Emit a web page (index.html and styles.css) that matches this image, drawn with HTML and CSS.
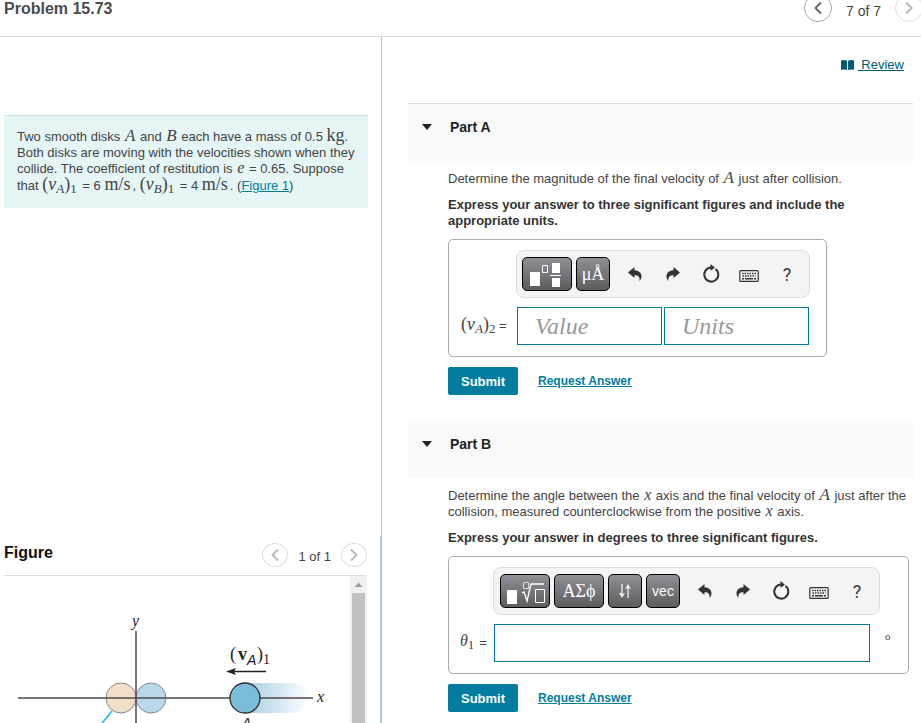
FILE: index.html
```html
<!DOCTYPE html>
<html lang="en">
<head>
    <meta charset="UTF-8" />
    <meta name="viewport" content="width=device-width, initial-scale=1.0" />
    <title>Problem 15.73</title>
    <link rel="stylesheet" href="styles.css">
</head>
<body>
    <!-- shared icons -->
    <svg class="sprite" aria-hidden="true">
        <symbol id="chevron-left" viewBox="0 0 10 14"><path d="M8 1.500 2.500 7 8 12.500" fill="none" stroke="currentColor" stroke-width="2" /></symbol>
        <symbol id="chevron-right" viewBox="0 0 10 14"><path d="M2 1.500 7.500 7 2 12.500" fill="none" stroke="currentColor" stroke-width="2" /></symbol>
        <symbol id="undo" viewBox="0 0 20 20"><path d="M3 8.500 9.500 3v3.300c4.500.2 7 2.700 7 6.200 0 1.800-.8 3.200-2 4.500.6-3.800-1-5.800-5-5.800V14z" fill="currentColor" /></symbol>
        <symbol id="redo" viewBox="0 0 20 20"><path d="M17 8.500 10.500 3v3.300c-4.500.2-7 2.700-7 6.200 0 1.800.8 3.200 2 4.500-.6-3.800 1-5.800 5-5.800V14z" fill="currentColor" /></symbol>
        <symbol id="reset" viewBox="0 0 20 20"><path d="M14.500 5A7 7 0 1 1 10 3.600" fill="none" stroke="currentColor" stroke-width="2" /><path d="m9.500 0 4.500 3.800-4.500 3z" fill="currentColor" /></symbol>
        <symbol id="keyboard" viewBox="0 0 20 12"><rect x=".8" y=".6" width="18.400" height="10.800" rx="1" fill="none" stroke="currentColor" stroke-width="1.200" /><path d="M3 3.500h14M3.500 6h13" stroke="currentColor" stroke-width="1.400" stroke-dasharray="1.500 1" /><path d="M3 8.700h2m1 0h8m1 0h2" stroke="currentColor" stroke-width="1.400" /></symbol>
    </svg>

    <header class="top-bar">
        <h1>Problem 15.73</h1>
        <nav class="pager">
            <button class="round" aria-label="Previous item"><svg width="10" height="14"><use href="#chevron-left" /></svg></button>
            <span>7 of 7</span>
            <button class="round faded" aria-label="Next item" disabled><svg width="10" height="14"><use href="#chevron-right" /></svg></button>
        </nav>
    </header>

    <main>
        <section class="left">
            <div class="problem">
                Two smooth disks <i class="math">A</i> and <i class="math">B</i> each have a mass of 0.5 <span class="math">kg</span>.<br>
                Both disks are moving with the velocities shown when they<br>
                collide. The coefficient of restitution is <i class="math small">e</i> = 0.65. Suppose<br>
                <span class="tall">that <span class="math">(<i>v</i><sub><i>A</i></sub>)<sub>1</sub></span> = 6 <span class="math">m/s</span>, <span class="math">(<i>v</i><sub><i>B</i></sub>)<sub>1</sub></span> = 4 <span class="math">m/s</span>. (<a href="#figure">Figure 1</a>)</span>
            </div>

            <div class="figure-panel" id="figure">
                <div class="figure-head">
                    <h2>Figure</h2>
                    <nav class="pager">
                        <button class="round faded" aria-label="Previous figure" disabled><svg width="10" height="14"><use href="#chevron-left" /></svg></button>
                        <span>1 of 1</span>
                        <button class="round faded" aria-label="Next figure" disabled><svg width="10" height="14"><use href="#chevron-right" /></svg></button>
                    </nav>
                </div>
                <div class="figure-view">
                    <svg class="diagram" width="346" height="160" viewBox="0 0 346 160">
                        <defs>
                            <linearGradient id="trail">
                                <stop offset="0" stop-color="#a9cfe4" />
                                <stop offset=".3" stop-color="#c0dcec" />
                                <stop offset="1" stop-color="#fff" />
                            </linearGradient>
                        </defs>
                        <path d="M108 135 94 152" stroke="#1fb4ea" stroke-width="1.500" />
                        <circle cx="117" cy="122" r="15" fill="#f1dfca" stroke="#8b8583" />
                        <circle cx="147" cy="122" r="15" fill="#b9d9ea" stroke="#7f8d95" />
                        <path d="M241 107h48q16 4 16 15t-16 15h-48z" fill="url(#trail)" />
                        <path d="M14 122h295M132 55v105" stroke="#4f4a4c" stroke-width="1.500" />
                        <circle cx="241" cy="122" r="15" fill="#7bbdd8" stroke="#2b2b2b" stroke-width="1.300" />
                        <path d="M230 95.500h32" stroke="#222" stroke-width="1.500" />
                        <path d="m222 95.500 10-3.500-2 3.500 2 3.500z" fill="#222" />
                        <text x="128" y="50" class="axis">y</text>
                        <text x="313" y="126" class="axis">x</text>
                        <text x="226" y="84" class="label">(</text>
                        <text x="234" y="84" class="label bold">v</text>
                        <text x="243" y="89" class="label index">A</text>
                        <text x="253" y="84" class="label">)</text>
                        <text x="259" y="88" class="label digit">1</text>
                        <text x="238" y="152" class="label index">A</text>
                    </svg>
                    <div class="scrollbar"><span class="scroll-up"></span><span class="thumb"></span></div>
                </div>
            </div>
        </section>

        <section class="right">
            <a class="review" href="#review"><svg width="13" height="10" viewBox="0 0 13 10"><path d="M0 .500q3.500-1 6 .4V10Q3.500 9 0 9.700zM13 .500q-3.500-1-6 .4V10q2.500-1 6-.3z" fill="currentColor" /></svg><span>&nbsp;Review</span></a>

            <article class="part">
                <h3 class="part-head ruled">Part A</h3>
                <div class="part-body">
                    <p>Determine the magnitude of the final velocity of <i class="math">A</i> just after collision.</p>
                    <p class="hint">Express your answer to three significant figures and include the<br>appropriate units.</p>
                    <form class="answer answer-a">
                        <div class="toolbar">
                            <button type="button" class="tool wide" aria-label="Templates">
                                <svg width="36" height="26" viewBox="0 0 36 26"><path d="M1 11h10v14H1z" fill="#fff" /><path d="M13.500 4.500h5v7h-5z" fill="none" stroke="#fff" /><path d="M23 2h8v10h-8zM23 17h8v10h-8zM21 14h11v1H21z" fill="#fff" /></svg>
                            </button>
                            <button type="button" class="tool serif">μÅ</button>
                            <div class="actions">
                                <button type="button" aria-label="Undo"><svg width="20" height="20"><use href="#undo" /></svg></button>
                                <button type="button" aria-label="Redo"><svg width="20" height="20"><use href="#redo" /></svg></button>
                                <button type="button" aria-label="Reset"><svg width="20" height="20"><use href="#reset" /></svg></button>
                                <button type="button" aria-label="Keyboard"><svg class="keys" width="20" height="12"><use href="#keyboard" /></svg></button>
                                <button type="button">?</button>
                            </div>
                        </div>
                        <label for="value"><span class="math">(<i>v</i><sub><i>A</i></sub>)<sub>2</sub></span> =</label>
                        <div class="fields">
                            <input type="text" id="value" placeholder="Value" />
                            <input type="text" id="units" placeholder="Units" aria-label="Units" />
                        </div>
                    </form>
                    <div class="submit-row">
                        <button class="submit">Submit</button>
                        <a href="#answer-a">Request Answer</a>
                    </div>
                </div>
            </article>

            <article class="part">
                <h3 class="part-head">Part B</h3>
                <div class="part-body">
                    <p>Determine the angle between the <i class="math small">x</i> axis and the final velocity of <i class="math">A</i> just after the<br>collision, measured counterclockwise from the positive <i class="math small">x</i> axis.</p>
                    <p class="hint">Express your answer in degrees to three significant figures.</p>
                    <form class="answer answer-b">
                        <div class="toolbar">
                            <button type="button" class="tool wide" aria-label="Templates">
                                <svg width="40" height="26" viewBox="0 0 40 26"><path d="M2 12h10v14H2z" fill="#fff" /><path d="M18.500 4.500h5v6h-5z" fill="none" stroke="#ddd" /><path d="m17 15 2-1 3 9 4-17h13" fill="none" stroke="#fff" stroke-width="1.300" /><path d="M30.500 11.500h9v13h-9z" fill="none" stroke="#fff" /></svg>
                            </button>
                            <button type="button" class="tool wide serif">ΑΣϕ</button>
                            <button type="button" class="tool" aria-label="Arrows">
                                <svg width="14" height="16" viewBox="0 0 14 16"><path d="M4 1v12M10 15V3" stroke="#eee" stroke-width="1.300" /><path d="m1 10 3 5V10zm3 0v5l3-5-3 1zM7 6l3-5 3 5-3-1z" fill="#eee" /></svg>
                            </button>
                            <button type="button" class="tool">vec</button>
                            <div class="actions">
                                <button type="button" aria-label="Undo"><svg width="20" height="20"><use href="#undo" /></svg></button>
                                <button type="button" aria-label="Redo"><svg width="20" height="20"><use href="#redo" /></svg></button>
                                <button type="button" aria-label="Reset"><svg width="20" height="20"><use href="#reset" /></svg></button>
                                <button type="button" aria-label="Keyboard"><svg class="keys" width="20" height="12"><use href="#keyboard" /></svg></button>
                                <button type="button">?</button>
                            </div>
                        </div>
                        <label for="theta"><span class="math small"><i>θ</i><sub>1</sub></span> =</label>
                        <div class="fields">
                            <input type="text" id="theta" />
                            <span class="degree">o</span>
                        </div>
                    </form>
                    <div class="submit-row">
                        <button class="submit">Submit</button>
                        <a href="#answer-b">Request Answer</a>
                    </div>
                </div>
            </article>
        </section>
    </main>
</body>
</html>
```
FILE: styles.css
```css
* {
    box-sizing: border-box;
}
body {
    margin: 0;
    height: 100vh;
    display: flex;
    flex-direction: column;
    overflow: hidden;
    background: #fff;
    color: #444;
    font-family: "Liberation Sans", Arial, sans-serif;
    font-size: 13px;
    line-height: 16px;
}
button,
input {
    font-family: inherit;
    margin: 0;
    padding: 0;
}
button {
    cursor: pointer;
}
h1,
h2,
h3,
p {
    margin: 0;
}
a {
    color: #047c9f;
}
.sprite {
    position: absolute;
    width: 0;
    height: 0;
}
.math {
    font-family: "Liberation Serif", "Times New Roman", serif;
    font-size: 18px;
    line-height: 0;
}
i.math {
    margin: 0 1px;
    font-size: 17px;
}
.math.small {
    font-size: 16px;
}
.math sub {
    font-size: 13px;
    line-height: 0;
    vertical-align: -3px;
}

/* top bar */
.top-bar {
    flex: none;
    display: flex;
    justify-content: space-between;
    height: 37px;
    padding-left: 4px;
    border-bottom: 1px solid #ddd;
}
h1 {
    font-size: 16px;
    line-height: 18px;
    color: #4c4c4c;
}
.pager {
    display: flex;
    align-items: center;
    gap: 14px;
    font-size: 14px;
}
.top-bar .pager {
    height: 28px;
    margin: -6px -2px 0 0;
}
.pager span {
    padding-top: 5px;
}
.round {
    display: flex;
    align-items: center;
    justify-content: center;
    width: 28px;
    height: 28px;
    border: 1px solid #aaa;
    border-radius: 50%;
    background: #fff;
    color: #666;
}
.round.faded {
    border-color: #ddd;
    color: #bbb;
}

main {
    flex: 1;
    min-height: 0;
    display: grid;
    grid-template-columns: 382px 1fr;
    grid-template-rows: minmax(0, 1fr);
}

/* problem and figure */
.left {
    display: flex;
    flex-direction: column;
    justify-content: space-between;
    padding-top: 78px;
    border-right: 1px solid #b9c4cc;
}
.problem {
    margin: 0 13px 0 4px;
    padding: 13px 0 13px 13px;
    border-top: 1px solid #d4dfdf;
    background: #e6f5f6;
    white-space: nowrap;
}
.tall {
    display: block;
    line-height: 18px;
}
.tall .math {
    margin-right: 2px;
}
.figure-panel {
    height: 187px;
    padding: 0 13px 0 4px;
    border-right: 1px solid #b5c9dc;
}
.figure-head {
    display: flex;
    align-items: center;
    justify-content: space-between;
    height: 40px;
    border-bottom: 1px solid #ddd;
}
.figure-head h2 {
    padding-bottom: 6px;
    font-size: 16px;
    color: #111;
}
.figure-head .pager {
    gap: 10px;
    padding-bottom: 2px;
    font-size: 13px;
}
.figure-head .round {
    width: 26px;
    height: 24px;
}
.figure-view {
    display: flex;
    height: 147px;
    overflow: hidden;
}
.diagram {
    flex: 1;
    min-width: 0;
}
.axis,
.label {
    font-family: "Liberation Serif", "Times New Roman", serif;
    font-size: 16px;
    fill: #222;
}
.axis {
    font-style: italic;
}
.label {
    font-size: 18px;
}
.bold {
    font-weight: bold;
}
.index {
    font-family: "Liberation Sans", Arial, sans-serif;
    font-size: 14px;
    font-style: italic;
}
.digit {
    font-size: 14px;
}
.scrollbar {
    width: 17px;
    background: #f1f1f1;
}
.scroll-up {
    display: block;
    width: 8px;
    height: 17px;
    margin: 0 auto;
    background: #999;
    clip-path: polygon(50% 40%, 100% 65%, 0 65%);
}
.thumb {
    display: block;
    width: 13px;
    height: 100%;
    margin: 0 auto;
    background: #c1c1c1;
}

/* answer parts */
.right {
    min-width: 0;
    padding: 20px 8px 0 26px;
}
.review {
    display: flex;
    align-items: center;
    justify-content: flex-end;
    gap: 4px;
    margin-right: 9px;
    color: #005a70;
    text-decoration: none;
}
.review span {
    text-decoration: underline;
}
.part:first-of-type {
    margin-top: 30px;
}
.part {
    margin-bottom: 26px;
}
.part-head {
    display: flex;
    align-items: center;
    height: 57px;
    padding-bottom: 11px;
    background: #f9f9f9;
    color: #222;
    font-size: 14px;
}
.part-head.ruled {
    height: 58px;
    border-top: 1px solid #ddd;
}
.part-head::before {
    content: "";
    margin: 0 18px 0 14px;
    border: 5px solid transparent;
    border-top: 6px solid #222;
    border-bottom: 0;
}
.part-body {
    padding: 10px 0 0 40px;
    white-space: nowrap;
}
.part-body p {
    margin-bottom: 10px;
}
.part-body .hint {
    font-weight: bold;
    color: #333;
}
.answer {
    display: grid;
    row-gap: 9px;
    align-items: center;
    padding: 10px 0 11px;
    border: 1px solid #aaa;
    border-radius: 5px;
}
.answer-a {
    width: 379px;
    grid-template-columns: 67px 294px;
}
.answer-b {
    width: 461px;
    grid-template-columns: 44px 1fr;
}
.toolbar {
    grid-column: 2;
    justify-self: start;
    display: flex;
    align-items: center;
    gap: 4px;
    height: 48px;
    padding: 0 3px 0 5px;
    border: 1px solid #ddd;
    border-radius: 8px;
    background: #f4f4f4;
}
.answer-b .toolbar {
    padding-left: 6px;
}
.tool {
    display: flex;
    align-items: center;
    justify-content: center;
    width: 34px;
    height: 34px;
    border: 1px solid #000;
    border-radius: 5px;
    background: linear-gradient(#918f98, #5c5c5c);
    color: #fff;
    font-size: 14px;
}
.tool.wide {
    width: 50px;
}
.tool.serif {
    font-family: "Liberation Serif", "Times New Roman", serif;
    font-size: 18px;
}
.actions {
    display: flex;
    margin-left: 2px;
}
.actions button {
    display: flex;
    align-items: center;
    justify-content: center;
    width: 38px;
    height: 34px;
    border: 0;
    background: none;
    color: #333;
    font-family: Roboto, sans-serif;
    font-size: 18px;
}
.keys {
    margin-top: 4px;
}
.answer label {
    padding-left: 12px;
}
.answer-b label {
    display: flex;
    align-items: center;
    gap: 5px;
    padding-left: 11px;
}
.fields {
    display: flex;
    gap: 2px;
    padding-left: 1px;
}
.fields input {
    width: 145px;
    height: 38px;
    padding-left: 17px;
    border: 1px solid #047c9f;
    border-radius: 0;
    background: #fff;
    font-family: "Liberation Serif", "Times New Roman", serif;
    font-size: 24px;
}
.fields input::placeholder {
    color: #999;
    font-style: italic;
}
.answer-b .fields {
    gap: 15px;
}
.answer-b .fields input {
    width: 376px;
}
.degree {
    padding-top: 4px;
    font-family: "Liberation Serif", "Times New Roman", serif;
    font-size: 11px;
}
.submit-row {
    display: flex;
    align-items: center;
    gap: 20px;
    margin-top: 10px;
}
.submit {
    width: 70px;
    height: 28px;
    border: 0;
    border-radius: 2px;
    background: #047c9f;
    color: #fff;
    font-size: 13px;
    font-weight: bold;
}
.submit-row a {
    font-size: 12px;
    font-weight: bold;
}
```
